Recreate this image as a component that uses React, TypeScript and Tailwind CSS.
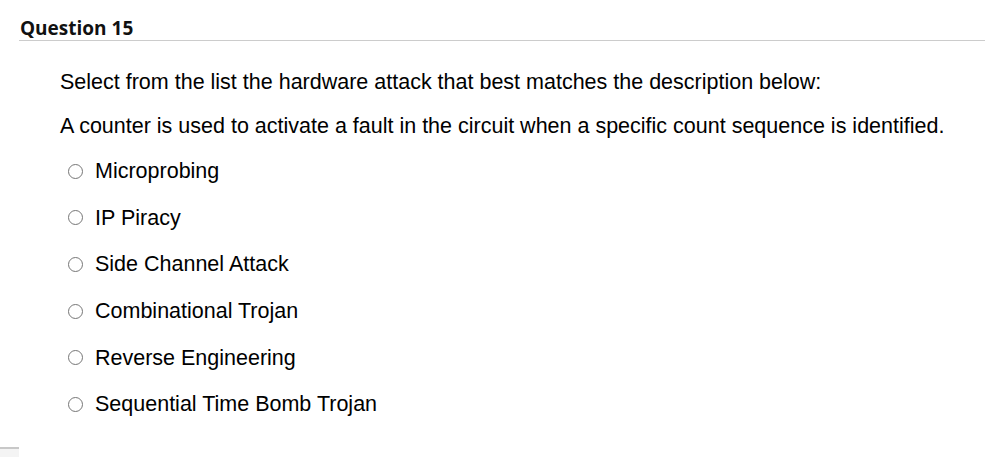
const OPTIONS = [
  "Microprobing",
  "IP Piracy",
  "Side Channel Attack",
  "Combinational Trojan",
  "Reverse Engineering",
  "Sequential Time Bomb Trojan",
];

export default function App() {
  return (
    <div className="w-[985px] h-[457px] bg-white flex flex-col overflow-hidden">
      <div className="ml-[19px] h-[41px] border-b border-[#cccccc] flex items-end pb-[2px]">
        <h2 className="pl-[1px] text-[19px] font-bold text-[#111] leading-none font-['Open_Sans',sans-serif]">
          Question 15
        </h2>
      </div>
      <div className="pl-[60px] pt-[19px] text-[21.5px] text-black font-['Liberation_Sans',Arial,sans-serif]">
        <p className="h-[44px] flex items-center">
          Select from the list the hardware attack that best matches the description below:
        </p>
        <p className="h-[44px] flex items-center">
          A counter is used to activate a fault in the circuit when a specific count sequence is identified.
        </p>
        <ul>
          {OPTIONS.map((opt) => (
            <li key={opt} className="h-[46.6px] flex items-center pl-[7.5px]">
              <span className="w-[15px] h-[15px] rounded-full border border-[#767676] bg-white shrink-0" />
              <span className="ml-[12.5px]">{opt}</span>
            </li>
          ))}
        </ul>
      </div>
      <div className="mt-auto w-[19px] h-[10px] bg-[#f4f4f4] border-t-2 border-[#c8c8c8]" />
    </div>
  );
}
